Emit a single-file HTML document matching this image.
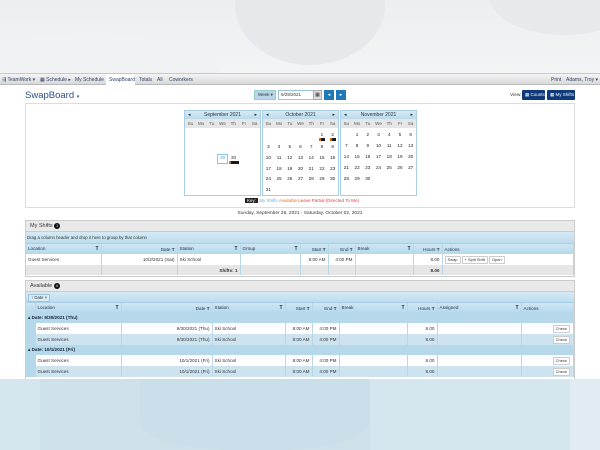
<!DOCTYPE html>
<html><head><meta charset="utf-8">
<style>
*{box-sizing:border-box;margin:0;padding:0}
body{width:600px;height:450px;position:relative;overflow:hidden;font-family:"Liberation Sans",sans-serif;font-size:5px;color:#333;background:#fff}
.a{position:absolute}
.topbg{left:0;top:0;width:600px;height:73px;background:linear-gradient(180deg,#eceeef,#f3f4f5);overflow:hidden}
.nav{left:0;top:73px;width:600px;height:12px;background:linear-gradient(#f4f4f4,#d9d9d9);border-top:1px solid #c8c8c8;border-bottom:1px solid #bbb}
.nav span{position:absolute;top:3px;font-size:5px;color:#2a3f66}
.botbg{left:0;top:379px;width:600px;height:71px;background:#d6e6ee;overflow:hidden}
.btn{background:#0e3a7a;color:#fff;font-size:4.5px;border-radius:1px}
.cal{background:#fff;border:1px solid #a9cde3}
.cal .h{height:8px;background:linear-gradient(#d7eaf6,#b9d9ec);font-size:5px;text-align:center;line-height:8px;color:#234;position:relative}
.cal .dw{height:9px;background:#e6e6e6;display:flex;font-size:4.5px;color:#555;line-height:9px}
.cal .dw span,.row span{flex:1;text-align:center}
.row{display:flex;font-size:4.6px;color:#222;position:absolute;left:0;right:0}
.ev{display:inline-block;width:6px;height:3px;background:#1a1a1a;border-left:2px solid #d07020}
.panel{left:25px;width:550px;border:1px solid #ccc}
.ph{height:11px;background:#e9e9e9;border-bottom:1px solid #ccc;font-size:5.5px;line-height:11px;padding-left:4px;color:#333}
.badge{display:inline-block;width:6px;height:6px;border-radius:3px;background:#111;color:#fff;font-size:4px;line-height:6px;text-align:center;vertical-align:middle}
table{border-collapse:collapse;table-layout:fixed;width:100%}
td{font-size:4.6px;white-space:nowrap;overflow:hidden;padding:0 2px;border-right:1px solid #b8d8ea}
tr.hd td{background:linear-gradient(#cfe6f4,#b4d8ec);height:10px;color:#234}
tr.w td{background:#fff;height:11px}
tr.b td{background:#cde3ef;height:11px}
tr.g td{background:#b5d8eb;height:10px;font-weight:bold;color:#123}
tr.f td{background:#e6e6e6;height:10px}
.r{text-align:right}
.fl{float:right;font-weight:bold;font-size:5px}
.sb{display:inline-block;border:1px solid #ccc;background:#fff;padding:0 2px;font-size:4px;line-height:6px;border-radius:1px;margin-right:1px}
</style></head><body>
<div class="a topbg">
<div class="a" style="left:235px;top:-55px;width:150px;height:120px;border-radius:50%;background:#e6e9eb"></div>
<div class="a" style="left:490px;top:-40px;width:150px;height:75px;border-radius:50%;background:#e7eaec"></div>
<div class="a" style="left:-40px;top:35px;width:260px;height:80px;border-radius:50%;background:#f1f2f3"></div>
</div>
<div class="a nav">
<span style="left:2px">⇶ TeamWork ▾</span>
<span style="left:40px">▦ Schedule ▸</span>
<span style="left:75px">My Schedule</span>
<span style="left:106px;top:0;height:11px;width:29px;background:#fff;padding:3px 0 0 3px">SwapBoard</span>
<span style="left:139px">Totals</span>
<span style="left:157px">All</span>
<span style="left:169px">Coworkers</span>
<span style="left:551px">Print</span>
<span style="left:566px">Adams, Troy ▾</span>
</div>
<div class="a" style="left:25px;top:90px;font-size:9.5px;color:#2b4d8c">SwapBoard <span style="font-size:5px">▾</span></div>
<div class="a" style="left:254px;top:90px;width:22px;height:10px;background:#b9d6e8;border:1px solid #9cc;font-size:4.5px;line-height:8px;padding-left:3px;color:#234">Week ▾</div>
<div class="a" style="left:278px;top:90px;width:36px;height:10px;border:1px solid #9bc4dc;background:#fff;font-size:4.5px;line-height:8px;padding-left:2px">9/29/2021</div>
<div class="a" style="left:313px;top:90px;width:9px;height:10px;background:#ddd;border:1px solid #aaa;font-size:5px;text-align:center;line-height:8px">▦</div>
<div class="a" style="left:324px;top:90px;width:10px;height:10px;background:#1f78b8;color:#fff;font-size:5px;text-align:center;line-height:10px">◂</div>
<div class="a" style="left:336px;top:90px;width:10px;height:10px;background:#1f78b8;color:#fff;font-size:5px;text-align:center;line-height:10px">▸</div>
<div class="a" style="left:510px;top:93px;font-size:4.8px">View:</div>
<div class="a btn" style="left:522px;top:90px;width:23px;height:10px;line-height:10px;padding-left:3px">▦ Counts</div>
<div class="a btn" style="left:547px;top:90px;width:28px;height:10px;line-height:10px;padding-left:3px">▦ My Shifts</div>
<div class="a" style="left:25px;top:103px;width:550px;height:105px;border:1px solid #ddd"></div>

<div class="a cal" style="left:184px;top:110px;width:77px;height:86px">
<div class="h"><span style="position:absolute;left:3px">◂</span>September 2021<span style="position:absolute;right:3px">▸</span></div>
<div class="dw"><span>Su</span><span>Mo</span><span>Tu</span><span>We</span><span>Th</span><span>Fr</span><span>Sa</span></div>
<div class="a" style="left:32px;top:43px;width:11px;height:10px;border:1px solid #8cc4e6;font-size:4.6px;color:#5aa0d0;text-align:center">29</div>
<div class="a" style="left:43px;top:44px;width:11px;font-size:4.6px;text-align:center">30<br><span class="ev" style="width:10px"></span></div>
</div>
<div class="a cal" style="left:262px;top:110px;width:77px;height:86px">
<div class="h"><span style="position:absolute;left:3px">◂</span>October 2021<span style="position:absolute;right:3px">▸</span></div>
<div class="dw"><span>Su</span><span>Mo</span><span>Tu</span><span>We</span><span>Th</span><span>Fr</span><span>Sa</span></div>
<div class="row" style="top:21px"><span></span><span></span><span></span><span></span><span></span><span>1<br><span class="ev"></span></span><span>2<br><span class="ev"></span></span></div>
<div class="row" style="top:33px"><span>3</span><span>4</span><span>5</span><span>6</span><span>7</span><span>8</span><span>9</span></div>
<div class="row" style="top:44px"><span>10</span><span>11</span><span>12</span><span>13</span><span>14</span><span>15</span><span>16</span></div>
<div class="row" style="top:55px"><span>17</span><span>18</span><span>19</span><span>20</span><span>21</span><span>22</span><span>23</span></div>
<div class="row" style="top:65px"><span>24</span><span>25</span><span>26</span><span>27</span><span>28</span><span>29</span><span>30</span></div>
<div class="row" style="top:76px"><span>31</span><span></span><span></span><span></span><span></span><span></span><span></span></div>
</div>
<div class="a cal" style="left:340px;top:110px;width:77px;height:86px">
<div class="h"><span style="position:absolute;left:3px">◂</span>November 2021<span style="position:absolute;right:3px">▸</span></div>
<div class="dw"><span>Su</span><span>Mo</span><span>Tu</span><span>We</span><span>Th</span><span>Fr</span><span>Sa</span></div>
<div class="row" style="top:21px"><span></span><span>1</span><span>2</span><span>3</span><span>4</span><span>5</span><span>6</span></div>
<div class="row" style="top:32px"><span>7</span><span>8</span><span>9</span><span>10</span><span>11</span><span>12</span><span>13</span></div>
<div class="row" style="top:43px"><span>14</span><span>15</span><span>16</span><span>17</span><span>18</span><span>19</span><span>20</span></div>
<div class="row" style="top:54px"><span>21</span><span>22</span><span>23</span><span>24</span><span>25</span><span>26</span><span>27</span></div>
<div class="row" style="top:65px"><span>28</span><span>29</span><span>30</span><span></span><span></span><span></span><span></span></div>
</div>
<div class="a" style="left:245px;top:198px;font-size:4.5px;white-space:nowrap"><span style="background:#222;color:#fff;padding:0 2px">Key:</span> <span style="color:#6ab0de">My Shifts</span> <span style="color:#f07020">Available</span> <span style="color:#e04040">Leave Partial (Directed To Me)</span></div>
<div class="a" style="left:0;width:600px;top:211px;text-align:center;font-size:4.8px">Sunday, September 26, 2021 - Saturday, October 02, 2021</div>

<div class="a panel" style="top:220px;height:57px">
<div class="ph">My Shifts <span class="badge">1</span></div>
<div style="height:12px;background:linear-gradient(#d5eaf6,#bcdcee);font-size:4.3px;line-height:12px;padding-left:1px;border-bottom:1px solid #a8cfe5">Drag a column header and drop it here to group by that column</div>
<table>
<colgroup><col style="width:75px"><col style="width:76px"><col style="width:63px"><col style="width:60px"><col style="width:28px"><col style="width:27px"><col style="width:58px"><col style="width:29px"><col></colgroup>
<tr class="hd"><td>Location<span class="fl">T</span></td><td class="r">Date <b>T</b></td><td>Station<span class="fl">T</span></td><td>Group<span class="fl">T</span></td><td class="r">Start <b>T</b></td><td class="r">End <b>T</b></td><td>Break<span class="fl">T</span></td><td class="r">Hours <b>T</b></td><td>Actions</td></tr>
<tr class="w"><td>Guest Services</td><td class="r">10/2/2021 (Sat)</td><td>Ski School</td><td></td><td class="r">8:00 AM</td><td class="r">4:00 PM</td><td></td><td class="r">8.00</td><td><span class="sb">Swap</span><span class="sb">+ Split Shift</span><span class="sb">Open</span></td></tr>
<tr class="f"><td></td><td></td><td class="r"><b>Shifts: 1</b></td><td></td><td></td><td></td><td></td><td class="r"><b>8.00</b></td><td></td></tr>
</table>
</div>

<div class="a panel" style="top:280px;height:110px;border-bottom:none">
<div class="ph">Available <span class="badge">4</span></div>
<div style="height:11px;background:linear-gradient(#d5eaf6,#bcdcee);padding:2px 0 0 2px;border-bottom:1px solid #a8cfe5"><span style="display:inline-block;border:1px solid #9cc4dc;background:#d8ebf6;font-size:4.3px;line-height:6px;padding:0 2px">↑ Date ×</span></div>
<table>
<colgroup><col style="width:9px"><col style="width:86px"><col style="width:91px"><col style="width:73px"><col style="width:27px"><col style="width:27px"><col style="width:68px"><col style="width:30px"><col style="width:84px"><col></colgroup>
<tr class="hd"><td></td><td>Location<span class="fl">T</span></td><td class="r">Date <b>T</b></td><td>Station<span class="fl">T</span></td><td class="r">Start <b>T</b></td><td class="r">End <b>T</b></td><td>Break<span class="fl">T</span></td><td class="r">Hours <b>T</b></td><td>Assigned<span class="fl">T</span></td><td>Actions</td></tr>
<tr class="g"><td colspan="10">▴ Date: 9/30/2021 (Thu)</td></tr>
<tr class="w"><td style="background:#b5d8eb"></td><td>Guest Services</td><td class="r">9/30/2021 (Thu)</td><td>Ski School</td><td class="r">8:00 AM</td><td class="r">4:00 PM</td><td></td><td class="r">8.00</td><td></td><td style="text-align:right"><span class="sb">Check</span></td></tr>
<tr class="b"><td style="background:#b5d8eb"></td><td>Guest Services</td><td class="r">9/30/2021 (Thu)</td><td>Ski School</td><td class="r">8:00 AM</td><td class="r">4:00 PM</td><td></td><td class="r">8.00</td><td></td><td style="text-align:right"><span class="sb">Check</span></td></tr>
<tr class="g"><td colspan="10">▴ Date: 10/1/2021 (Fri)</td></tr>
<tr class="w"><td style="background:#b5d8eb"></td><td>Guest Services</td><td class="r">10/1/2021 (Fri)</td><td>Ski School</td><td class="r">8:00 AM</td><td class="r">4:00 PM</td><td></td><td class="r">8.00</td><td></td><td style="text-align:right"><span class="sb">Check</span></td></tr>
<tr class="b"><td style="background:#b5d8eb"></td><td>Guest Services</td><td class="r">10/1/2021 (Fri)</td><td>Ski School</td><td class="r">8:00 AM</td><td class="r">4:00 PM</td><td></td><td class="r">8.00</td><td></td><td style="text-align:right"><span class="sb">Check</span></td></tr>
</table>
</div>

<div class="a botbg">
<div class="a" style="left:40px;top:0;width:330px;height:71px;background:#cee1ea"></div>
<div class="a" style="left:140px;top:0;width:230px;height:71px;border-radius:0 0 40% 40%;background:#cadfe9"></div>
<div class="a" style="left:570px;top:0;width:30px;height:71px;background:#e0ecf2"></div>
</div>
</body></html>
